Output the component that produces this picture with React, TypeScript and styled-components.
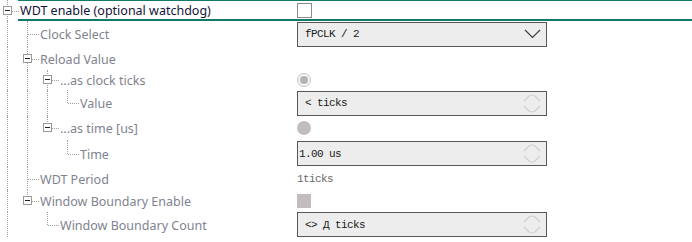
import React from "react";
import styled, { createGlobalStyle } from "styled-components";

type Guide = "pass" | "tee" | "elbow" | "blank";

type Control =
  | { kind: "checkbox" }
  | { kind: "select"; value: string }
  | { kind: "spin"; value: string; pad: number }
  | { kind: "radio"; checked: boolean }
  | { kind: "square" }
  | { kind: "text"; value: string }
  | { kind: "none" };

interface RowData {
  label: string;
  guides: Guide[];
  box?: boolean;
  height: number;
  selected?: boolean;
  control: Control;
}

const rows: RowData[] = [
  { label: "WDT enable (optional watchdog)", guides: ["tee"], box: true, height: 21, selected: true, control: { kind: "checkbox" } },
  { label: "Clock Select", guides: ["pass", "tee"], height: 26, control: { kind: "select", value: "fPCLK / 2" } },
  { label: "Reload Value", guides: ["pass", "tee"], box: true, height: 23, control: { kind: "none" } },
  { label: "...as clock ticks", guides: ["pass", "pass", "tee"], box: true, height: 20, control: { kind: "radio", checked: true } },
  { label: "Value", guides: ["pass", "pass", "pass", "elbow"], height: 26, control: { kind: "spin", value: "< ticks", pad: 7 } },
  { label: "...as time [us]", guides: ["pass", "pass", "elbow"], box: true, height: 24, control: { kind: "radio", checked: false } },
  { label: "Time", guides: ["pass", "pass", "blank", "elbow"], height: 27, control: { kind: "spin", value: "1.00 us", pad: 1 } },
  { label: "WDT Period", guides: ["pass", "tee"], height: 23, control: { kind: "text", value: "1ticks" } },
  { label: "Window Boundary Enable", guides: ["pass", "elbow"], box: true, height: 22, control: { kind: "square" } },
  { label: "Window Boundary Count", guides: ["pass", "blank", "elbow"], height: 25, control: { kind: "spin", value: "<> Д ticks", pad: 7 } },
];

const GlobalStyle = createGlobalStyle`
  html, body {
    margin: 0;
    padding: 0;
    background: #ffffff;
  }
  body {
    font-family: "Noto Sans", "Liberation Sans", sans-serif;
    width: 692px;
    height: 242px;
    overflow: hidden;
  }
`;

const Tree = styled.div`
  display: flex;
  flex-direction: column;
  width: 692px;
`;

const Row = styled.div<{ $h: number }>`
  display: flex;
  align-items: stretch;
  height: ${(p) => p.$h}px;
`;

const Guides = styled.div`
  display: flex;
  flex-shrink: 0;
`;

const GuideCell = styled.div<{ $type: Guide }>`
  position: relative;
  width: 20px;
  flex-shrink: 0;

  &::before {
    content: "";
    position: absolute;
    left: 7px;
    top: 0;
    bottom: ${(p) => (p.$type === "elbow" ? "50%" : "0")};
    border-left: 1px dotted #a0a0a0;
    display: ${(p) => (p.$type === "blank" ? "none" : "block")};
  }

  &::after {
    content: "";
    position: absolute;
    left: 8px;
    width: 11px;
    top: 50%;
    border-top: 1px dotted #a0a0a0;
    display: ${(p) => (p.$type === "tee" || p.$type === "elbow" ? "block" : "none")};
  }
`;

const ExpandBox = styled.span`
  position: absolute;
  z-index: 1;
  left: 3px;
  top: 50%;
  margin-top: -5px;
  width: 7px;
  height: 7px;
  border: 1px solid #9a9a9a;
  background: #ffffff;

  &::after {
    content: "";
    position: absolute;
    left: 1px;
    right: 1px;
    top: 3px;
    border-top: 1px solid #202020;
  }
`;

const Body = styled.div<{ $selected: boolean }>`
  flex: 1;
  display: flex;
  align-items: center;
  margin-left: ${(p) => (p.$selected ? "-2px" : "0")};
  padding-left: ${(p) => (p.$selected ? "2px" : "0")};
  border-top: ${(p) => (p.$selected ? "1px solid #117a6b" : "none")};
  border-bottom: ${(p) => (p.$selected ? "2px solid #117a6b" : "none")};
`;

const LabelText = styled.div<{ $selected: boolean; $indent: number }>`
  width: ${(p) => 297 - p.$indent}px;
  flex-shrink: 0;
  font-size: 12.5px;
  padding-top: 1px;
  color: ${(p) => (p.$selected ? "#14143a" : "#80838f")};
  white-space: nowrap;
  box-sizing: border-box;
`;

const ValueCell = styled.div`
  flex: 1;
  display: flex;
  align-items: center;
`;

const Checkbox = styled.span`
  width: 13px;
  height: 13px;
  border: 1px solid #8c8c8c;
  background: #ffffff;
`;

const InputBox = styled.div<{ $pad: number }>`
  width: 250px;
  height: 25px;
  box-sizing: border-box;
  border: 1px solid #585858;
  background: #ededed;
  display: flex;
  align-items: center;
  justify-content: space-between;
  padding-left: ${(p) => p.$pad}px;
  padding-right: 5px;
`;

const MonoText = styled.span<{ $muted?: boolean }>`
  font-family: "Liberation Mono", "DejaVu Sans Mono", monospace;
  font-size: 11px;
  letter-spacing: -0.6px;
  color: ${(p) => (p.$muted ? "#6a6a6a" : "#1a1a1a")};
  white-space: pre;
`;

const Radio = styled.span<{ $checked: boolean }>`
  width: 14px;
  height: 14px;
  box-sizing: border-box;
  border-radius: 50%;
  display: flex;
  align-items: center;
  justify-content: center;
  border: ${(p) => (p.$checked ? "1px solid #c4c4c4" : "none")};
  background: ${(p) => (p.$checked ? "#f4f4f4" : "#c1bdbd")};

  &::after {
    content: "";
    width: 8px;
    height: 8px;
    border-radius: 50%;
    background: #b5b3b3;
    display: ${(p) => (p.$checked ? "block" : "none")};
  }
`;

const Square = styled.span`
  width: 14px;
  height: 14px;
  background: #c1bdbd;
`;

const Chevron = () => (
  <svg width="17" height="10" viewBox="0 0 17 10">
    <polyline points="1,1 8.5,8.5 16,1" fill="none" stroke="#3a3a3a" strokeWidth="1.1" />
  </svg>
);

const Spinner = () => (
  <svg width="18" height="21" viewBox="0 0 18 21">
    <path d="M1 8 L6 3 Q9 1 12 3 L17 8" fill="none" stroke="#d0d0d0" strokeWidth="1.2" />
    <path d="M1 13 L6 18 Q9 20 12 18 L17 13" fill="none" stroke="#d0d0d0" strokeWidth="1.2" />
  </svg>
);

const renderControl = (c: Control) => {
  switch (c.kind) {
    case "checkbox":
      return <Checkbox />;
    case "select":
      return (
        <InputBox $pad={7}>
          <MonoText>{c.value}</MonoText>
          <Chevron />
        </InputBox>
      );
    case "spin":
      return (
        <InputBox $pad={c.pad}>
          <MonoText>{c.value}</MonoText>
          <Spinner />
        </InputBox>
      );
    case "radio":
      return <Radio $checked={c.checked} />;
    case "square":
      return <Square />;
    case "text":
      return <MonoText $muted>{c.value}</MonoText>;
    default:
      return null;
  }
};

const App: React.FC = () => {
  return (
    <>
      <GlobalStyle />
      <Tree>
        {rows.map((r) => (
          <Row key={r.label} $h={r.height}>
            <Guides>
              {r.guides.map((g, i) => (
                <GuideCell key={i} $type={g}>
                  {r.box && i === r.guides.length - 1 && <ExpandBox />}
                </GuideCell>
              ))}
            </Guides>
            <Body $selected={!!r.selected}>
              <LabelText $selected={!!r.selected} $indent={r.guides.length * 20}>
                {r.label}
              </LabelText>
              <ValueCell>{renderControl(r.control)}</ValueCell>
            </Body>
          </Row>
        ))}
      </Tree>
    </>
  );
};

export default App;
